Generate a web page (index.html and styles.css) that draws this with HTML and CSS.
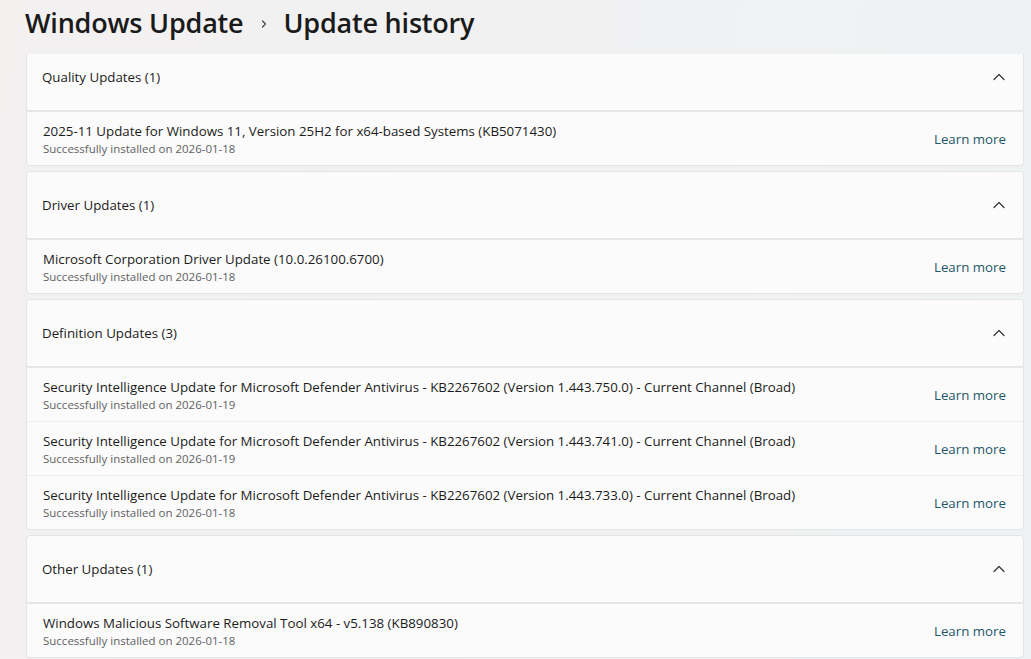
FILE: index.html
```html
<!DOCTYPE html>
<html lang="en">
<head>
    <meta charset="UTF-8">
    <meta name="viewport" content="width=device-width, initial-scale=1.0">
    <title>Update history</title>
    <link rel="stylesheet" href="styles.css">
</head>
<body>
<div class="page">
    <h1 class="breadcrumb">
        <span>Windows Update</span>
        <svg class="crumb-sep" width="10" height="10" viewBox="0 0 10 10"><path d="M3.5 2 L6.5 5 L3.5 8" fill="none" stroke="#444" stroke-width="1.2" stroke-linecap="round" stroke-linejoin="round"/></svg>
        <span>Update history</span>
    </h1>

    <div class="scroller">
        <div class="list">
            <div class="group">
                <div class="group-header">
                    <span>Quality Updates (1)</span>
                    <svg class="chevron" width="12" height="8" viewBox="0 0 12 8"><path d="M1 6.5 L6 1.5 L11 6.5" fill="none" stroke="#333" stroke-width="1.2" stroke-linecap="round" stroke-linejoin="round"/></svg>
                </div>
                <div class="group-body">
                    <div class="item">
                        <div class="item-text">
                            <div class="item-title">2025-11 Update for Windows 11, Version 25H2 for x64-based Systems (KB5071430)</div>
                            <div class="item-sub">Successfully installed on 2026-01-18</div>
                        </div>
                        <a class="learn" href="#">Learn more</a>
                    </div>
                </div>
            </div>

            <div class="group">
                <div class="group-header">
                    <span>Driver Updates (1)</span>
                    <svg class="chevron" width="12" height="8" viewBox="0 0 12 8"><path d="M1 6.5 L6 1.5 L11 6.5" fill="none" stroke="#333" stroke-width="1.2" stroke-linecap="round" stroke-linejoin="round"/></svg>
                </div>
                <div class="group-body">
                    <div class="item">
                        <div class="item-text">
                            <div class="item-title">Microsoft Corporation Driver Update (10.0.26100.6700)</div>
                            <div class="item-sub">Successfully installed on 2026-01-18</div>
                        </div>
                        <a class="learn" href="#">Learn more</a>
                    </div>
                </div>
            </div>

            <div class="group">
                <div class="group-header">
                    <span>Definition Updates (3)</span>
                    <svg class="chevron" width="12" height="8" viewBox="0 0 12 8"><path d="M1 6.5 L6 1.5 L11 6.5" fill="none" stroke="#333" stroke-width="1.2" stroke-linecap="round" stroke-linejoin="round"/></svg>
                </div>
                <div class="group-body">
                    <div class="item">
                        <div class="item-text">
                            <div class="item-title">Security Intelligence Update for Microsoft Defender Antivirus - KB2267602 (Version 1.443.750.0) - Current Channel (Broad)</div>
                            <div class="item-sub">Successfully installed on 2026-01-19</div>
                        </div>
                        <a class="learn" href="#">Learn more</a>
                    </div>
                    <div class="item">
                        <div class="item-text">
                            <div class="item-title">Security Intelligence Update for Microsoft Defender Antivirus - KB2267602 (Version 1.443.741.0) - Current Channel (Broad)</div>
                            <div class="item-sub">Successfully installed on 2026-01-19</div>
                        </div>
                        <a class="learn" href="#">Learn more</a>
                    </div>
                    <div class="item">
                        <div class="item-text">
                            <div class="item-title">Security Intelligence Update for Microsoft Defender Antivirus - KB2267602 (Version 1.443.733.0) - Current Channel (Broad)</div>
                            <div class="item-sub">Successfully installed on 2026-01-18</div>
                        </div>
                        <a class="learn" href="#">Learn more</a>
                    </div>
                </div>
            </div>

            <div class="group">
                <div class="group-header">
                    <span>Other Updates (1)</span>
                    <svg class="chevron" width="12" height="8" viewBox="0 0 12 8"><path d="M1 6.5 L6 1.5 L11 6.5" fill="none" stroke="#333" stroke-width="1.2" stroke-linecap="round" stroke-linejoin="round"/></svg>
                </div>
                <div class="group-body">
                    <div class="item">
                        <div class="item-text">
                            <div class="item-title">Windows Malicious Software Removal Tool x64 - v5.138 (KB890830)</div>
                            <div class="item-sub">Successfully installed on 2026-01-18</div>
                        </div>
                        <a class="learn" href="#">Learn more</a>
                    </div>
                </div>
            </div>
        </div>
    </div>
</div>
</body>
</html>
```

FILE: styles.css
```css
html, body {
    height: 100%;
}

body {
    margin: 0;
    font-family: "Open Sans", "Noto Sans", sans-serif;
    color: #1b1b1b;
    background: linear-gradient(100deg, #f3f0f0 0%, #f1f1f2 45%, #eef2f4 100%);
    overflow: hidden;
}

.page {
    height: 100%;
    display: flex;
    flex-direction: column;
}

.breadcrumb {
    margin: 0;
    padding: 0 0 0 25px;
    height: 44px;
    box-sizing: border-box;
    display: flex;
    align-items: center;
    gap: 14px;
    font-size: 27px;
    font-weight: 600;
    letter-spacing: -0.2px;
    color: #1a1a1a;
}

.crumb-sep {
    margin: 3px 0 0 2px;
}

.scroller {
    flex: 1;
    overflow: hidden;
    margin: 10px 7px 0 26px;
}

.list {
    margin-top: -11px;
    display: flex;
    flex-direction: column;
    gap: 5px;
}

.group-header {
    height: 66px;
    background: #fbfbfb;
    border: 1px solid #e5e5e5;
    border-radius: 4px 4px 0 0;
    display: flex;
    align-items: center;
    justify-content: space-between;
    padding: 0 18px 0 15px;
    font-size: 13.3px;
}

.group-body {
    background: #fbfbfb;
    border: 1px solid #e5e5e5;
    border-top-color: #e8e8e8;
    border-radius: 0 0 4px 4px;
}

.item {
    height: 53px;
    display: flex;
    align-items: center;
    justify-content: space-between;
    padding: 0 17px 0 16px;
    border-top: 1px solid #eeeeee;
}

.item:first-child {
    border-top: none;
}

.item-text {
    margin-top: 2px;
}

.item-title {
    font-size: 13.3px;
    line-height: 19px;
}

.item-sub {
    font-size: 11.5px;
    line-height: 16px;
    color: #616161;
}

.learn {
    font-size: 13.3px;
    color: #1f5768;
    text-decoration: none;
}
```
